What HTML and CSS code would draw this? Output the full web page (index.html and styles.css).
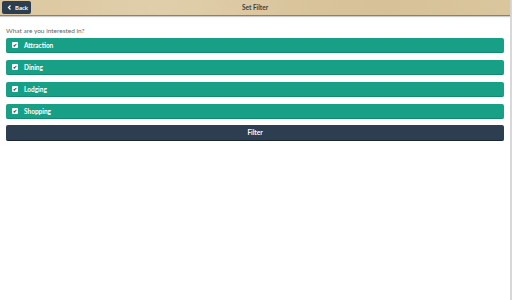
FILE: index.html
```html
<!DOCTYPE html>
<html lang="en">
<head>
    <meta charset="UTF-8">
    <meta name="viewport" content="width=device-width, initial-scale=1.0">
    <title>Set Filter</title>
    <link rel="stylesheet" href="styles.css">
</head>
<body>

    <div class="page">
        <div class="header">
            <a class="back-btn" href="#">
                <svg width="5" height="5" viewBox="0 0 10 10"><path d="M7 1 L3 5 L7 9" fill="none" stroke="#fff" stroke-width="2.4"/></svg>
                Back
            </a>
            <div class="title">Set Filter</div>
        </div>

        <div class="content">
            <p class="question">What are you interested in?</p>

            <div class="options">
                <label class="option"><span class="check">&#10004;</span>Attraction</label>
                <label class="option"><span class="check">&#10004;</span>Dining</label>
                <label class="option"><span class="check">&#10004;</span>Lodging</label>
                <label class="option"><span class="check">&#10004;</span>Shopping</label>
            </div>

            <button class="filter-btn">Filter</button>
        </div>
    </div>

</body>
</html>
```

FILE: styles.css
```css
body {
    margin: 0;
    background-color: #fff;
    font-family: 'Lato', sans-serif;
    overflow: hidden;
}

.page {
    width: 510px;
    height: 300px;
    border-right: 2px solid #d8d8d8;
}

.header {
    position: relative;
    height: 15px;
    display: flex;
    align-items: center;
    justify-content: center;
    background-color: #dcc8a0;
    background-image: radial-gradient(circle at 30% 50%, rgba(255,255,255,0.12), transparent 40%),
                      radial-gradient(circle at 75% 40%, rgba(160,130,80,0.1), transparent 45%);
    border-bottom: 1px solid #8f8068;
    box-shadow: 0 1px 1px rgba(0,0,0,0.2);
}

.title {
    font-size: 6.5px;
    font-weight: bold;
    color: #3e3e3e;
}

.back-btn {
    position: absolute;
    left: 2px;
    top: 1px;
    height: 13px;
    width: 29px;
    box-sizing: border-box;
    display: flex;
    align-items: center;
    gap: 3px;
    padding-left: 5px;
    background-color: #2c3e50;
    border-radius: 2px;
    color: #fff;
    font-size: 6px;
    font-weight: bold;
    text-decoration: none;
}

.content {
    padding: 0 6px;
}

.question {
    margin: 11px 0 4px;
    font-size: 6.5px;
    color: #666;
}

.options {
    display: flex;
    flex-direction: column;
    gap: 7px;
}

.option {
    height: 15px;
    display: flex;
    align-items: center;
    padding-left: 6px;
    background-color: #17a085;
    border-bottom: 1px solid #128a72;
    border-radius: 2px;
    color: #fff;
    font-size: 6.5px;
    font-weight: bold;
    box-sizing: border-box;
}

.check {
    width: 6px;
    height: 6px;
    margin-right: 6px;
    display: flex;
    align-items: center;
    justify-content: center;
    background-color: #fff;
    border-radius: 1px;
    color: #2c3e50;
    font-size: 5px;
    line-height: 1;
}

.filter-btn {
    display: block;
    width: 100%;
    height: 16px;
    margin-top: 6px;
    padding: 0;
    background-color: #2c3e50;
    border: none;
    border-bottom: 1px solid #1a2533;
    border-radius: 2px;
    color: #fff;
    font-family: 'Lato', sans-serif;
    font-size: 6.5px;
    font-weight: bold;
}
```
